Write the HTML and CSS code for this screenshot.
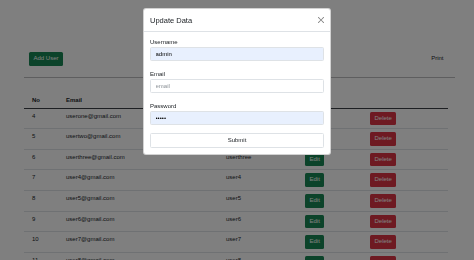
FILE: index.html
```html
<!DOCTYPE html>
<html lang="en">
<head>
<meta charset="utf-8">
<title>Users</title>
<link rel="stylesheet" href="styles.css">
</head>
<body>
<main class="page">
  <div class="toolbar">
    <button class="btn btn-success" type="button">Add User</button>
    <button class="btn btn-plain" type="button">Print</button>
  </div>
  <hr class="divider">
  <table class="table">
    <colgroup>
      <col class="c-no"><col class="c-email"><col class="c-user"><col class="c-edit"><col class="c-del">
    </colgroup>
    <thead>
      <tr><th>No</th><th>Email</th><th>Username</th><th>Action</th><th></th></tr>
    </thead>
    <tbody>
      <tr><td>4</td><td>userone@gmail.com</td><td>userone</td><td><button class="btn btn-success" type="button">Edit</button></td><td><button class="btn btn-danger" type="button">Delete</button></td></tr>
      <tr><td>5</td><td>usertwo@gmail.com</td><td>usertwo</td><td><button class="btn btn-success" type="button">Edit</button></td><td><button class="btn btn-danger" type="button">Delete</button></td></tr>
      <tr><td>6</td><td>userthree@gmail.com</td><td>userthree</td><td><button class="btn btn-success" type="button">Edit</button></td><td><button class="btn btn-danger" type="button">Delete</button></td></tr>
      <tr><td>7</td><td>user4@gmail.com</td><td>user4</td><td><button class="btn btn-success" type="button">Edit</button></td><td><button class="btn btn-danger" type="button">Delete</button></td></tr>
      <tr><td>8</td><td>user5@gmail.com</td><td>user5</td><td><button class="btn btn-success" type="button">Edit</button></td><td><button class="btn btn-danger" type="button">Delete</button></td></tr>
      <tr><td>9</td><td>user6@gmail.com</td><td>user6</td><td><button class="btn btn-success" type="button">Edit</button></td><td><button class="btn btn-danger" type="button">Delete</button></td></tr>
      <tr><td>10</td><td>user7@gmail.com</td><td>user7</td><td><button class="btn btn-success" type="button">Edit</button></td><td><button class="btn btn-danger" type="button">Delete</button></td></tr>
      <tr><td>11</td><td>user8@gmail.com</td><td>user8</td><td><button class="btn btn-success" type="button">Edit</button></td><td><button class="btn btn-danger" type="button">Delete</button></td></tr>
    </tbody>
  </table>
</main>

<div class="backdrop"></div>
<div class="modal-layer">
  <div class="modal" role="dialog" aria-labelledby="modalTitle">
    <div class="modal-header">
      <h5 class="modal-title" id="modalTitle">Update Data</h5>
      <button class="btn-close" type="button" aria-label="Close">
        <svg viewBox="0 0 16 16" width="6" height="6" aria-hidden="true"><path fill="#000" d="M.293.293a1 1 0 0 1 1.414 0L8 6.586 14.293.293a1 1 0 1 1 1.414 1.414L9.414 8l6.293 6.293a1 1 0 0 1-1.414 1.414L8 9.414l-6.293 6.293a1 1 0 0 1-1.414-1.414L6.586 8 .293 1.707a1 1 0 0 1 0-1.414z"/></svg>
      </button>
    </div>
    <form class="modal-body">
      <div class="form-group">
        <label class="label" for="username">Username</label>
        <input class="input autofilled" id="username" type="text" value="admin">
      </div>
      <div class="form-group">
        <label class="label" for="email">Email</label>
        <input class="input" id="email" type="email" placeholder="email">
      </div>
      <div class="form-group">
        <label class="label" for="password">Password</label>
        <input class="input autofilled" id="password" type="password" value="admin">
      </div>
      <button class="btn btn-outline" type="button">Submit</button>
    </form>
  </div>
</div>
</body>
</html>
```

FILE: styles.css
```css
* { box-sizing: border-box; }

html, body {
  margin: 0;
  height: 100%;
}

body {
  font-family: "Liberation Sans", Arial, Helvetica, sans-serif;
  font-size: 6px;
  line-height: 9px;
  color: #212529;
  background: #fff;
  overflow: hidden;
}

.page {
  padding: 52px 0 0 24px;
}

.toolbar {
  display: flex;
  justify-content: space-between;
  align-items: center;
  width: 424px;
  padding-left: 5px;
}

.btn {
  display: inline-block;
  font: inherit;
  height: 13.6px;
  padding: 0 4.5px;
  border: 0;
  border-radius: 1.5px;
  line-height: 13.6px;
  color: #fff;
  background: transparent;
  vertical-align: top;
  cursor: pointer;
}

.btn-success { background: #198754; }
.btn-danger { background: #dc3545; }
.btn-plain { color: #212529; }

.divider {
  width: 431px;
  margin: 11px 0 15px;
  border: 0;
  border-top: 1px solid rgba(33, 37, 41, 0.3);
  height: 0;
}

.table {
  width: 424px;
  table-layout: fixed;
  border-collapse: separate;
  border-spacing: 0;
}

.c-no { width: 34px; }
.c-email { width: 160px; }
.c-user { width: 79px; }
.c-edit { width: 65px; }
.c-del { width: 86px; }

.table th,
.table td {
  padding: 3px 8px;
  text-align: left;
  vertical-align: top;
  white-space: nowrap;
}

.table th {
  font-weight: bold;
  border-bottom: 1px solid #3a3f44;
}

.table td {
  border-bottom: 1px solid #dee2e6;
}

.backdrop {
  position: fixed;
  inset: 0;
  background: rgba(0, 0, 0, 0.5);
}

.modal-layer {
  position: fixed;
  inset: 0;
  display: flex;
  justify-content: center;
  align-items: flex-start;
  padding-top: 8px;
}

.modal {
  width: 188px;
  background: #fff;
  border: 1px solid rgba(0, 0, 0, 0.175);
  border-radius: 3px;
}

.modal-header {
  display: flex;
  align-items: center;
  justify-content: space-between;
  padding: 5.5px 6px;
  border-bottom: 1px solid #dee2e6;
}

.modal-title {
  margin: 0;
  font-size: 7.5px;
  line-height: 11px;
  font-weight: normal;
}

.btn-close {
  display: flex;
  width: 6px;
  height: 6px;
  padding: 0;
  border: 0;
  background: transparent;
  opacity: 0.5;
  cursor: pointer;
}

.modal-body {
  display: block;
  margin: 0;
  padding: 6px 6px 6px;
}

.form-group {
  margin-bottom: 8.5px;
}

.label {
  display: block;
}

.input {
  display: block;
  width: 100%;
  height: 14.3px;
  margin: 0;
  padding: 0 4.5px;
  font: inherit;
  color: #212529;
  background: #fff;
  border: 1px solid #dee2e6;
  border-radius: 1.5px;
}

.input::placeholder { color: #8a9096; }

.autofilled {
  background: #e8f0fe;
  color: #000;
}

.btn-outline {
  display: block;
  width: 100%;
  height: 14.3px;
  line-height: 12.3px;
  margin-top: 1px;
  color: #212529;
  background: #fff;
  border: 1px solid #dee2e6;
  text-align: center;
}
```
